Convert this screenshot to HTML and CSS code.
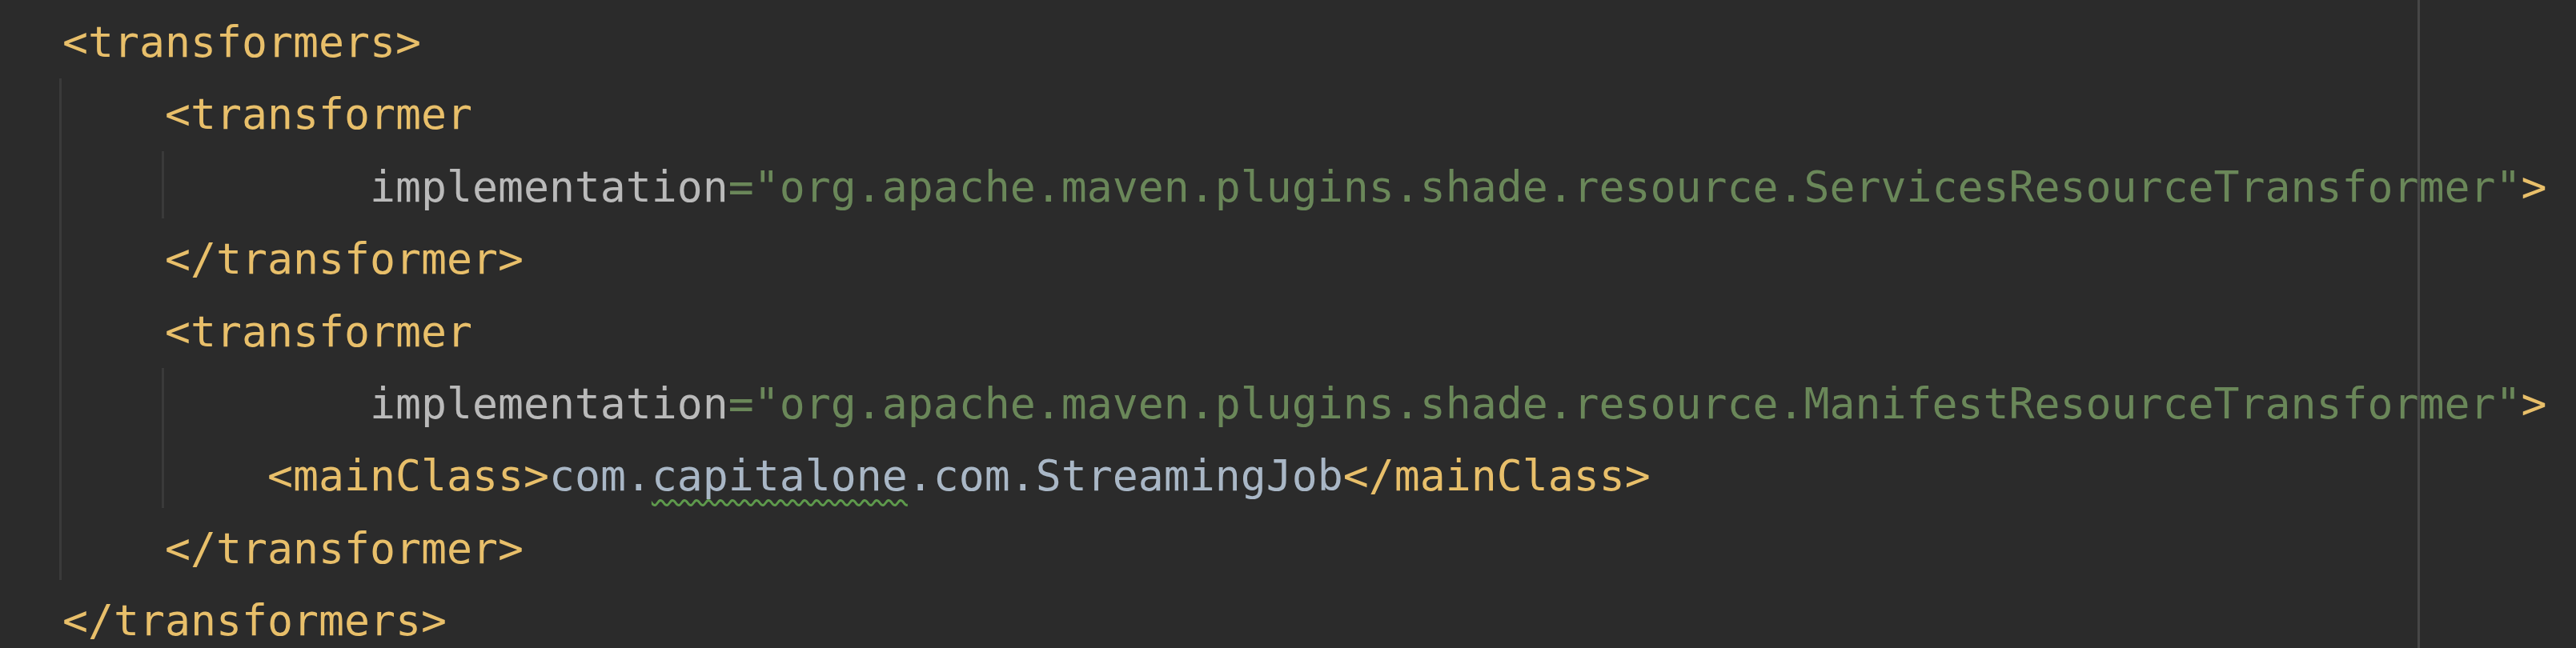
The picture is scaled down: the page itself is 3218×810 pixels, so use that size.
FILE: index.html
```html
<!DOCTYPE html>
<html>
<head>
<meta charset="utf-8">
<title>pom.xml</title>
<link rel="stylesheet" href="styles.css">
</head>
<body>
<div class="editor">
  <div class="line"><span class="tag">&lt;transformers&gt;</span></div>
  <div class="guide g0">
    <div class="line">    <span class="tag">&lt;transformer</span></div>
    <div class="guide g4">
      <div class="line">            <span class="attr">implementation</span><span class="val">="org.apache.maven.plugins.shade.resource.ServicesResourceTransformer"</span><span class="tag">&gt;</span></div>
    </div>
    <div class="line">    <span class="tag">&lt;/transformer&gt;</span></div>
    <div class="line">    <span class="tag">&lt;transformer</span></div>
    <div class="guide g4">
      <div class="line">            <span class="attr">implementation</span><span class="val">="org.apache.maven.plugins.shade.resource.ManifestResourceTransformer"</span><span class="tag">&gt;</span></div>
      <div class="line">        <span class="tag">&lt;mainClass&gt;</span><span class="text">com.<span class="typo">capitalone</span>.com.StreamingJob</span><span class="tag">&lt;/mainClass&gt;</span></div>
    </div>
    <div class="line">    <span class="tag">&lt;/transformer&gt;</span></div>
  </div>
  <div class="line"><span class="tag">&lt;/transformers&gt;</span></div>
</div>
</body>
</html>
```
FILE: styles.css
```css
html, body {
  margin: 0;
  padding: 0;
  background: #2b2b2b;
}

.editor {
  min-height: 100vh;
  box-sizing: border-box;
  padding: 8px 0 0 78px;
  background:
    linear-gradient(#474747, #474747) no-repeat 3020px 0 / 3px 100%,
    #2b2b2b;
  font-family: "DejaVu Sans Mono", "Liberation Mono", monospace;
  font-size: 53.15px;
  line-height: 90.4px;
  color: #a9b7c6;
}

.line {
  white-space: pre;
  height: 90.4px;
}

.guide {
  margin-left: -4px;
  padding-left: 4px;
  background-image: linear-gradient(#3a3a3a, #3a3a3a);
  background-repeat: no-repeat;
  background-size: 3px calc(100% - 6px);
}

.g0 {
  background-position: 0 0;
}

.g4 {
  background-position: 128px 0;
}

.tag { color: #e8bf6a; }
.attr { color: #bababa; }
.val { color: #6a8759; }
.text { color: #a9b7c6; }

.typo {
  text-decoration: underline wavy #5e9a4c;
  text-decoration-thickness: 3px;
  text-underline-offset: 11px;
  text-decoration-skip-ink: none;
}
```
